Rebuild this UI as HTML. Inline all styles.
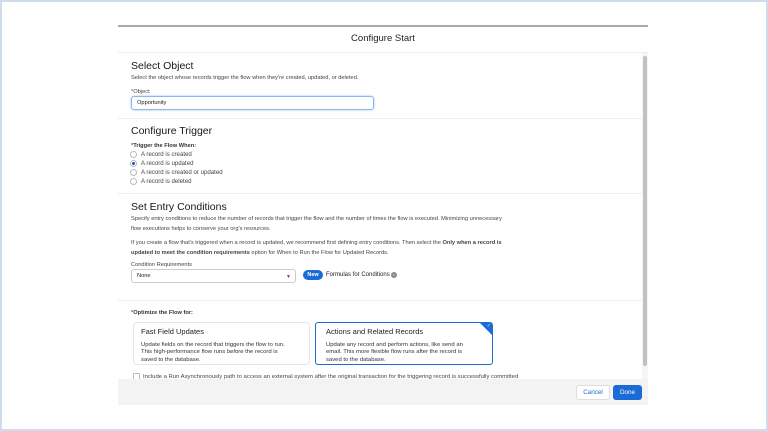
<!DOCTYPE html>
<html><head><meta charset="utf-8"><style>
*{margin:0;padding:0;box-sizing:border-box}
body{width:768px;height:431px;background:#fff;font-family:"Liberation Sans",sans-serif;color:#181818;position:relative;overflow:hidden}
.frame{position:absolute;left:0;top:0;width:768px;height:431px;border:2px solid #d0dcec}
.a{position:absolute;white-space:nowrap}
.h{font-size:10.5px;color:#181818}
.s{font-size:5.7px;color:#444}
.r{color:#c23934}
.rad{position:absolute;width:7px;height:7px;border:1px solid #bbb;border-radius:50%;background:#fff}
</style></head><body>
<div class="frame"></div>
<div class="a" style="left:118px;top:25px;width:530px;height:2px;background:#a9a9a9"></div>
<div class="a" style="left:118px;top:33px;width:530px;text-align:center;font-size:9.5px;color:#222">Configure Start</div>
<div class="a" style="left:118px;top:52px;width:530px;height:1px;background:#eee"></div>

<div class="a h" style="left:131px;top:60px">Select Object</div>
<div class="a s" style="left:131px;top:75px">Select the object whose records trigger the flow when they're created, updated, or deleted.</div>
<div class="a s" style="left:131px;top:89px"><span class="r">*</span>Object</div>
<div class="a" style="left:131px;top:96px;width:243px;height:14px;border:1px solid #8bb4f0;border-radius:3px;box-shadow:0 0 2px #9cc1f5"></div>
<div class="a s" style="left:137px;top:100px;color:#222">Opportunity</div>
<div class="a" style="left:118px;top:118px;width:524px;height:1px;background:#eee"></div>

<div class="a h" style="left:131px;top:125px">Configure Trigger</div>
<div class="a s" style="left:131px;top:143px;font-weight:bold;color:#333"><span class="r">*</span>Trigger the Flow When:</div>
<div class="rad" style="left:130px;top:151px"></div><div class="a s" style="left:141px;top:151px;font-size:6.1px">A record is created</div>
<div class="rad" style="left:130px;top:160px"></div><div class="a" style="left:132px;top:162px;width:3px;height:3px;border-radius:50%;background:#0b5cd5"></div><div class="a s" style="left:141px;top:160px;font-size:6.1px">A record is updated</div>
<div class="rad" style="left:130px;top:169px"></div><div class="a s" style="left:141px;top:169px;font-size:6.1px">A record is created or updated</div>
<div class="rad" style="left:130px;top:178px"></div><div class="a s" style="left:141px;top:178px;font-size:6.1px">A record is deleted</div>
<div class="a" style="left:118px;top:193px;width:524px;height:1px;background:#eee"></div>

<div class="a h" style="left:131px;top:201px">Set Entry Conditions</div>
<div class="a s" style="left:131px;top:215px;line-height:9.5px">Specify entry conditions to reduce the number of records that trigger the flow and the number of times the flow is executed. Minimizing unnecessary<br>flow executions helps to conserve your org's resources.</div>
<div class="a s" style="left:131px;top:239px;line-height:9.5px">If you create a flow that's triggered when a record is updated, we recommend first defining entry conditions. Then select the <b>Only when a record is</b><br><b>updated to meet the condition requirements</b> option for When to Run the Flow for Updated Records.</div>
<div class="a s" style="left:131px;top:262px">Condition Requirements</div>
<div class="a" style="left:131px;top:269px;width:165px;height:14px;border:1px solid #ccc;border-radius:3px"></div>
<div class="a s" style="left:137px;top:273px;color:#222">None</div>
<div class="a" style="left:286px;top:274px;font-size:5px;color:#555">▼</div>
<div class="a" style="left:303px;top:270px;width:20px;height:10px;border-radius:5px;background:#1b6bd6;color:#fff;font-size:5.5px;font-weight:bold;text-align:center;line-height:10px">New</div>
<div class="a s" style="left:326px;top:272px;color:#222;font-size:6px">Formulas for Conditions</div>
<div class="a" style="left:391px;top:272px;width:6px;height:6px;border-radius:50%;background:#8a8a8a;color:#fff;font-size:4px;text-align:center;line-height:6px">i</div>
<div class="a" style="left:118px;top:300px;width:524px;height:1px;background:#eee"></div>

<div class="a s" style="left:131px;top:310px;font-weight:bold;color:#333"><span class="r">*</span>Optimize the Flow for:</div>
<div class="a" style="left:133px;top:322px;width:177px;height:43px;border:1px solid #e5e5e5;border-radius:4px"></div>
<div class="a" style="left:141px;top:327px;font-size:7.5px;color:#222">Fast Field Updates</div>
<div class="a s" style="left:141px;top:342px;line-height:7.3px;color:#333;font-size:5.9px">Update fields on the record that triggers the flow to run.<br>This high-performance flow runs <i>before</i> the record is<br>saved to the database.</div>
<div class="a" style="left:315px;top:322px;width:178px;height:43px;border:1px solid #1b6bd6;border-radius:3px;overflow:hidden">
<div style="position:absolute;right:0;top:0;width:0;height:0;border-top:12px solid #1b6bd6;border-left:12px solid transparent"></div>
<div style="position:absolute;right:1px;top:0;color:#fff;font-size:5px">✓</div></div>
<div class="a" style="left:326px;top:327px;font-size:7.5px;color:#222">Actions and Related Records</div>
<div class="a s" style="left:326px;top:342px;line-height:7.3px;color:#333;font-size:5.9px">Update any record and perform actions, like send an<br>email. This more flexible flow runs after the record is<br>saved to the database.</div>
<div class="a" style="left:133px;top:373px;width:7px;height:7px;border:1px solid #bbb;border-radius:1px"></div>
<div class="a s" style="left:143px;top:374px;font-size:5.9px">Include a Run Asynchronously path to access an external system after the original transaction for the triggering record is successfully committed</div>

<div class="a" style="left:642px;top:53px;width:6px;height:326px;background:#f5f5f5"></div>
<div class="a" style="left:643px;top:56px;width:4px;height:310px;background:#c1c1c1;border-radius:2px"></div>

<div class="a" style="left:118px;top:379px;width:530px;height:26px;background:#f3f3f3"></div>
<div class="a" style="left:576px;top:385px;width:34px;height:15px;background:#fff;border:1px solid #ddd;border-radius:3px;color:#1b6bd6;font-size:6.3px;text-align:center;line-height:13px">Cancel</div>
<div class="a" style="left:613px;top:385px;width:29px;height:15px;background:#1b6bd6;border-radius:3px;color:#fff;font-size:6.3px;text-align:center;line-height:15px">Done</div>
</body></html>
